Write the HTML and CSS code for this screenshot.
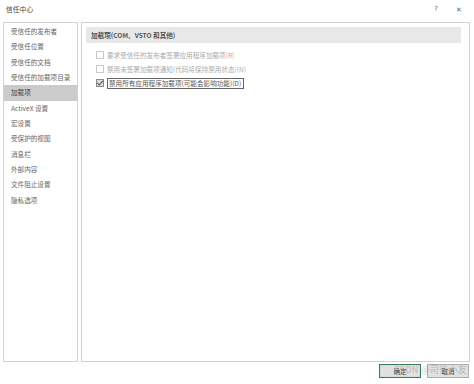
FILE: index.html
```html
<!DOCTYPE html>
<html lang="zh">
<head>
<meta charset="utf-8">
<link rel="stylesheet" href="styles.css">
</head>
<body>
<div class="dialog">
  <div class="titlebar">
    <span class="title">信任中心</span>
    <span class="tb-btns"><span class="help">?</span><span class="close">✕</span></span>
  </div>
  <div class="main">
    <ul class="sidebar">
      <li>受信任的发布者</li>
      <li>受信任位置</li>
      <li>受信任的文档</li>
      <li>受信任的加载项目录</li>
      <li class="sel">加载项</li>
      <li>ActiveX 设置</li>
      <li>宏设置</li>
      <li>受保护的视图</li>
      <li>消息栏</li>
      <li>外部内容</li>
      <li>文件阻止设置</li>
      <li>隐私选项</li>
    </ul>
    <div class="panel">
      <div class="section">加载项(COM、VSTO 和其他)</div>
      <div class="opts">
        <div class="opt dis"><span class="cb"></span><span>要求受信任的发布者签署应用程序加载项(R)</span></div>
        <div class="opt dis"><span class="cb"></span><span>禁用未签署加载项通知(代码将保持禁用状态)(N)</span></div>
        <div class="opt"><span class="cb on"><svg viewBox="0 0 8 8" width="8" height="8"><path d="M1.3 4.2 L3.2 6 L6.8 1.8" fill="none" stroke="#555" stroke-width="1.1"/></svg></span><span class="focus">禁用所有应用程序加载项(可能会影响功能)(D)</span></div>
      </div>
    </div>
  </div>
  <div class="footer">
    <button class="btn def">确定</button>
    <button class="btn">取消</button>
  </div>
  <div class="wm">CSDN @司徒小友</div>
</div>
</body>
</html>
```
FILE: styles.css
```css
html, body {
  margin: 0;
  padding: 0;
  background: #fff;
}
body {
  font-family: "Noto Sans CJK SC", "Noto Sans", sans-serif;
  font-size: 6.6px;
  color: #555;
}
.dialog {
  position: relative;
  width: 474px;
  height: 384px;
  overflow: hidden;
}
.titlebar {
  height: 22px;
  display: flex;
  align-items: flex-start;
  justify-content: space-between;
  padding: 4px 12px 0 6px;
  box-sizing: border-box;
  font-size: 6.8px;
  color: #444;
}
.title { line-height: 10px; }
.tb-btns {
  display: flex;
  gap: 18px;
  font-size: 8px;
  color: #666;
  line-height: 10px;
}
.help { font-size: 7px; font-family: "DejaVu Sans", sans-serif; }
.close { font-size: 7px; }
.main {
  display: flex;
  gap: 3px;
  padding: 0 4px 0 3px;
  height: 340px;
}
.sidebar {
  list-style: none;
  margin: 0;
  padding: 1px 0 0 0;
  width: 75px;
  box-sizing: border-box;
  border: 1px solid #d2d2d2;
  color: #666;
}
.sidebar li {
  height: 15.33px;
  line-height: 15.33px;
  padding-left: 7px;
  white-space: nowrap;
}
.sidebar li.sel {
  background: #cbcbcb;
  color: #444;
}
.panel {
  flex: 1;
  border: 1px solid #d2d2d2;
  box-sizing: border-box;
  padding: 4px 8px 0 4px;
}
.section {
  background: #e8e8e8;
  height: 16px;
  line-height: 16px;
  padding-left: 5px;
  font-weight: bold;
  color: #555;
}
.opts {
  padding: 6px 0 0 10px;
  display: flex;
  flex-direction: column;
  gap: 2.2px;
}
.opt {
  display: flex;
  align-items: center;
  gap: 3px;
  height: 12px;
  color: #555;
}
.opt.dis { color: #ababab; }
.cb {
  width: 8px;
  height: 8px;
  box-sizing: border-box;
  border: 1px solid #c8c8c8;
  background: #fff;
  display: inline-block;
  position: relative;
}
.cb.on {
  border-color: #8a8a8a;
  background: #dcdcdc;
}
.cb.on svg {
  position: absolute;
  left: -1px;
  top: -1px;
}
.focus {
  border: 1px solid #666;
  padding: 0 2px 0 1px;
  line-height: 9px;
}
.footer {
  display: flex;
  justify-content: flex-end;
  gap: 6px;
  padding: 2px 5px 0 0;
}
.btn {
  width: 42px;
  height: 14px;
  box-sizing: border-box;
  border: 1px solid #adadad;
  background: #e1e1e1;
  font-family: inherit;
  font-size: 6.6px;
  color: #444;
  padding: 0;
}
.btn.def {
  border: 1px solid #3a7a5a;
  box-shadow: inset 0 0 0 1px #cfe0d6;
}
.wm {
  position: absolute;
  right: 7px;
  bottom: 8px;
  font-size: 9px;
  color: rgba(140, 140, 140, 0.5);
  letter-spacing: 0.3px;
}
```
